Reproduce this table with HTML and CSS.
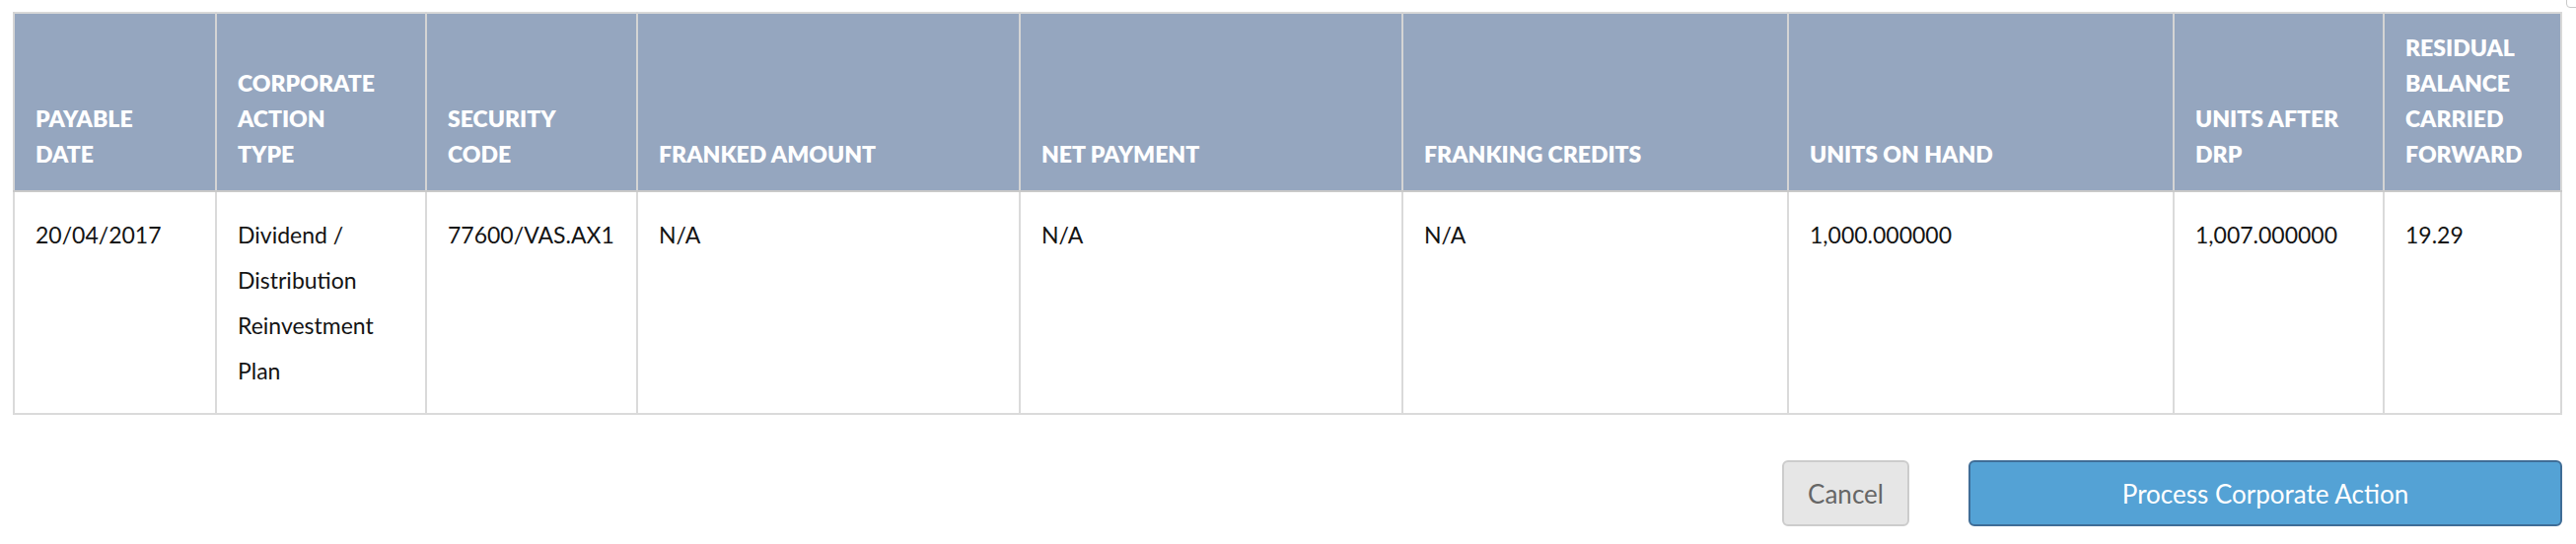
FILE: index.html
```html
<!DOCTYPE html>
<html lang="en">
<head>
<meta charset="utf-8">
<title>Corporate Action</title>
<link rel="stylesheet" href="styles.css">
</head>
<body>
<div class="corner"></div>
<main class="page">
  <table class="ca-table">
    <colgroup>
      <col class="c-date">
      <col class="c-type">
      <col class="c-code">
      <col class="c-wide">
      <col class="c-wide">
      <col class="c-wide2">
      <col class="c-wide2">
      <col class="c-type">
      <col class="c-last">
    </colgroup>
    <thead>
      <tr>
        <th>PAYABLE<br>DATE</th>
        <th>CORPORATE<br>ACTION<br>TYPE</th>
        <th>SECURITY<br>CODE</th>
        <th>FRANKED AMOUNT</th>
        <th>NET PAYMENT</th>
        <th>FRANKING CREDITS</th>
        <th>UNITS ON HAND</th>
        <th>UNITS AFTER<br>DRP</th>
        <th>RESIDUAL<br>BALANCE<br>CARRIED<br>FORWARD</th>
      </tr>
    </thead>
    <tbody>
      <tr>
        <td>20/04/2017</td>
        <td>Dividend /<br>Distribution<br>Reinvestment<br>Plan</td>
        <td>77600/VAS.AX1</td>
        <td>N/A</td>
        <td>N/A</td>
        <td>N/A</td>
        <td>1,000.000000</td>
        <td>1,007.000000</td>
        <td>19.29</td>
      </tr>
    </tbody>
  </table>
  <div class="actions">
    <button class="btn btn-cancel" type="button">Cancel</button>
    <button class="btn btn-primary" type="button">Process Corporate Action</button>
  </div>
</main>
</body>
</html>
```
FILE: styles.css
```css
html, body {
  margin: 0;
  padding: 0;
  background: #ffffff;
}
body {
  font-family: "Lato", "Liberation Sans", sans-serif;
  color: #141414;
  width: 2612px;
  height: 552px;
  overflow: hidden;
  position: relative;
}
.corner {
  position: absolute;
  top: -8px;
  right: -6px;
  width: 14px;
  height: 14px;
  border: 1px solid #c9c9c9;
  border-radius: 4px;
}
.page {
  padding: 12px 14px 0 13px;
}
.ca-table {
  width: 2585px;
  table-layout: fixed;
  border-collapse: collapse;
  border: 2px solid #d8d8d8;
}
.c-date { width: 205px; }
.c-type { width: 213px; }
.c-code { width: 214px; }
.c-wide { width: 388px; }
.c-wide2 { width: 391px; }
.c-last { width: 180px; }

.ca-table th {
  background: #95a6bf;
  color: #ffffff;
  font-weight: 800;
  font-size: 23px;
  line-height: 36px;
  text-align: left;
  vertical-align: bottom;
  padding: 16px 16px 19px 21px;
  border-left: 2px solid #d4d4d4;
  border-bottom: 2px solid #c9c9c9;
}
.ca-table td {
  font-size: 23px;
  line-height: 46px;
  vertical-align: top;
  padding: 20px 16px 20px 21px;
  border-left: 2px solid #dadada;
  border-bottom: 2px solid #dadada;
}
.actions {
  display: flex;
  justify-content: flex-end;
  gap: 60px;
  margin-top: 46px;
}
.btn {
  height: 67px;
  border-radius: 6px;
  font-family: "Lato", "Liberation Sans", sans-serif;
  font-size: 26px;
  cursor: pointer;
}
.btn-cancel {
  width: 129px;
  background: #e6e6e6;
  border: 2px solid #cccccc;
  color: #666666;
}
.btn-primary {
  width: 602px;
  background: #54a2d5;
  border: 2px solid #3f6d97;
  color: #ffffff;
}
```
